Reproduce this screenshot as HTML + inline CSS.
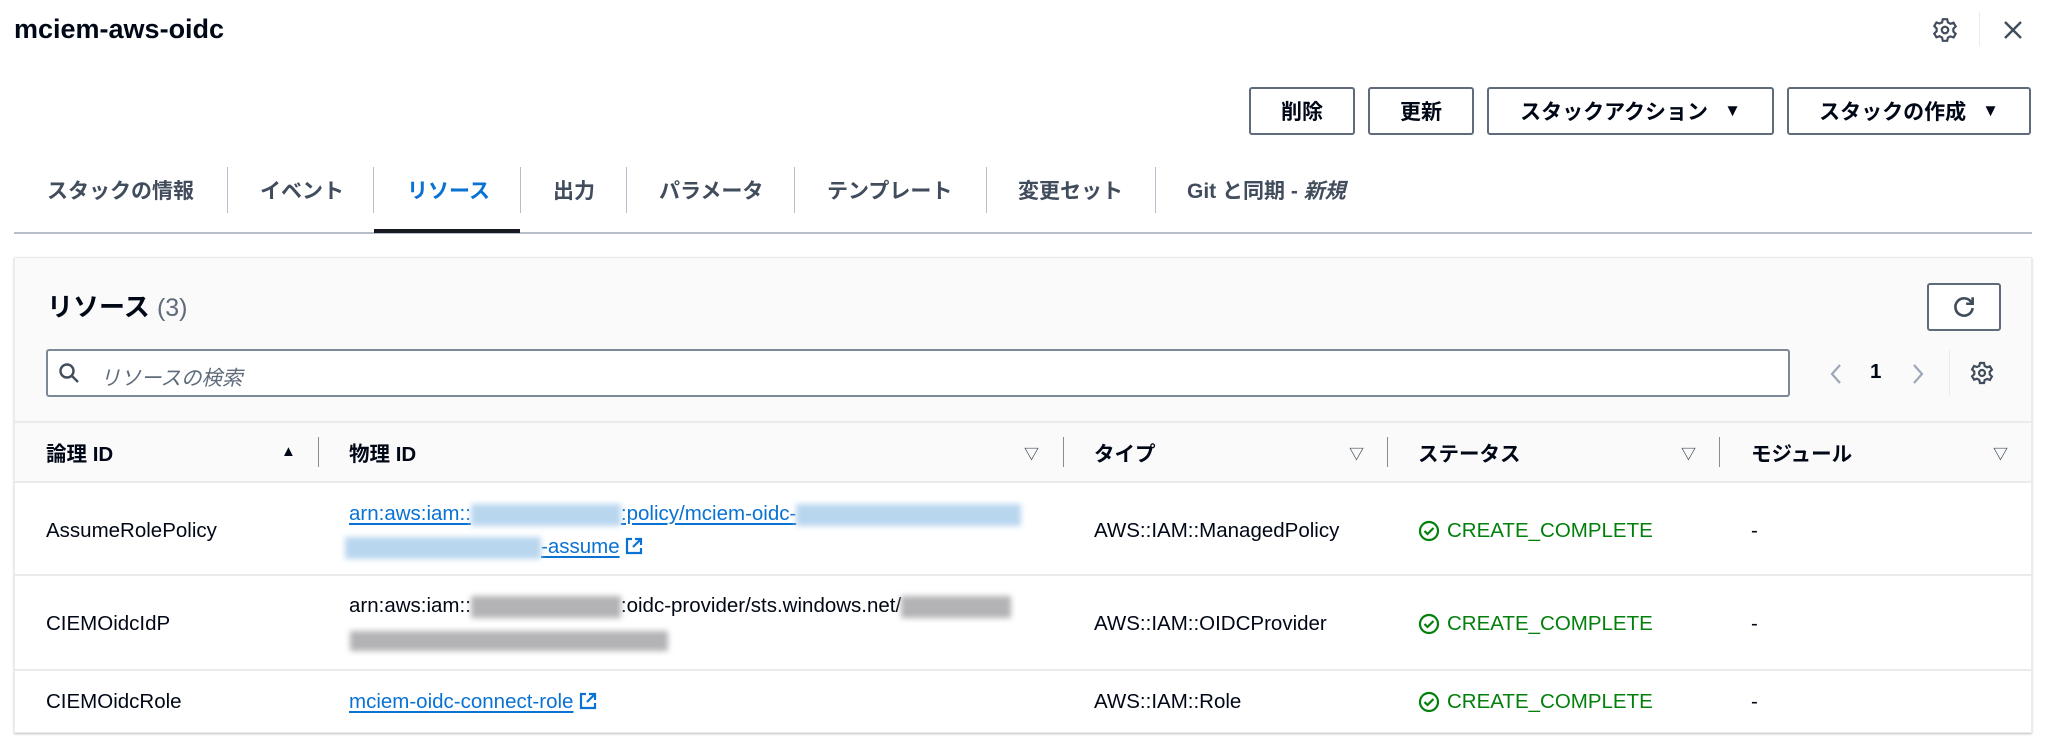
<!DOCTYPE html>
<html><head><meta charset="utf-8"><style>
*{margin:0;padding:0;box-sizing:border-box}
body{width:2048px;height:744px;background:#fff;position:relative;overflow:hidden;font-family:"Liberation Sans","Noto Sans CJK JP",sans-serif;color:#000716}
.a{position:absolute;white-space:nowrap}
.btn{position:absolute;top:87px;height:48px;border:2px solid #5f6b7a;border-radius:3px;background:#fff;font-weight:bold;font-size:21px;color:#000716;display:flex;align-items:center;justify-content:center;gap:16px}
.tab{position:absolute;top:190px;transform:translateY(-50%);font-size:21px;font-weight:bold;color:#414d5c}
.tsep{position:absolute;top:167px;width:1px;height:46px;background:#b6bec9}
.th{position:absolute;top:452px;transform:translateY(-50%);font-size:20.5px;font-weight:bold;color:#000716}
.hsep{position:absolute;top:437px;width:1px;height:30px;background:#8c8c94}
.tri{position:absolute;top:443px;font-size:15px;font-weight:bold;color:#414d5c}
.td{position:absolute;font-size:20.5px;transform:translateY(-50%)}
.rl{position:absolute;left:14px;width:2018px;height:2px;background:#e9ebed}
.lnk{color:#0972d3;text-decoration:underline;text-underline-offset:3px}
.bl{display:inline-block;vertical-align:middle;height:22px;filter:blur(3px)}
.ok{position:absolute;left:1418px;font-size:20.5px;color:#037f0c;transform:translateY(-50%);display:flex;align-items:center;gap:7px}
</style></head><body>
<div class="a" style="left:14px;top:14px;font-size:27px;font-weight:bold">mciem-aws-oidc</div>
<svg class="a" style="left:1932px;top:17px" width="26" height="26" viewBox="0 0 24 24" fill="none" stroke="#414d5c" stroke-width="2"><path d="M10 2h4l.7 3 2.3 1.3 2.9-1 2 3.4-2.2 2.1v2.6l2.2 2.1-2 3.4-2.9-1L14.7 19l-.7 3h-4l-.7-3L7 17.7l-2.9 1-2-3.4 2.2-2.1v-2.6L2.1 8.4l2-3.4 2.9 1L9.3 5z"/><circle cx="12" cy="12" r="3"/></svg>
<div class="a" style="left:1979px;top:12px;width:1px;height:34px;background:#e9ebed"></div>
<svg class="a" style="left:2002px;top:19px" width="22" height="22" viewBox="0 0 22 22" stroke="#414d5c" stroke-width="2.4"><path d="M3 3l16 16M19 3L3 19"/></svg>

<div class="btn" style="left:1249px;width:106px">削除</div>
<div class="btn" style="left:1368px;width:106px">更新</div>
<div class="btn" style="left:1487px;width:287px">スタックアクション <span style="font-size:17px">▼</span></div>
<div class="btn" style="left:1787px;width:244px">スタックの作成 <span style="font-size:17px">▼</span></div>

<div class="tab" style="left:47px">スタックの情報</div>
<div class="tsep" style="left:227px"></div>
<div class="tab" style="left:260px">イベント</div>
<div class="tsep" style="left:373px"></div>
<div class="tab" style="left:407px;color:#0972d3">リソース</div>
<div class="tsep" style="left:520px"></div>
<div class="tab" style="left:553px">出力</div>
<div class="tsep" style="left:626px"></div>
<div class="tab" style="left:659px">パラメータ</div>
<div class="tsep" style="left:794px"></div>
<div class="tab" style="left:827px">テンプレート</div>
<div class="tsep" style="left:986px"></div>
<div class="tab" style="left:1018px">変更セット</div>
<div class="tsep" style="left:1155px"></div>
<div class="tab" style="left:1187px">Git と同期 - <i>新規</i></div>
<div class="a" style="left:14px;top:232px;width:2018px;height:2px;background:#b6bec9"></div>
<div class="a" style="left:374px;top:229px;width:146px;height:4px;background:#16191f"></div>

<div class="a" style="left:14px;top:257px;width:2018px;height:476px;background:#fafafa;border:1px solid #eaeded;box-shadow:0 1px 2px rgba(0,7,22,.25)"></div>
<div class="a" style="left:47px;top:287px;font-size:26px;font-weight:bold">リソース <span style="font-weight:normal;color:#5f6b7a;font-size:25px">(3)</span></div>
<div class="a" style="left:1927px;top:283px;width:74px;height:48px;border:2px solid #5f6b7a;border-radius:3px;background:#fff"></div>
<svg class="a" style="left:1951px;top:294px" width="26" height="26" viewBox="0 0 24 24" fill="none" stroke="#414d5c" stroke-width="2.4"><path d="M19 8A8 8 0 1 0 20 13"/><path d="M20 3v6h-6"/></svg>

<div class="a" style="left:46px;top:349px;width:1744px;height:48px;border:2px solid #7d8998;border-radius:3px;background:#fff"></div>
<svg class="a" style="left:58px;top:362px" width="22" height="22" viewBox="0 0 22 22" fill="none" stroke="#414d5c" stroke-width="2.4"><circle cx="9" cy="9" r="6.5"/><path d="M14 14l6 6"/></svg>
<div class="a" style="left:100px;top:361px;font-size:20.5px;font-style:italic;color:#5f6b7a">リソースの検索</div>
<svg class="a" style="left:1828px;top:362px" width="16" height="24" viewBox="0 0 16 24" fill="none" stroke="#9ba7b6" stroke-width="2.2"><path d="M12 3L4 12l8 9"/></svg>
<div class="a" style="left:1870px;top:360px;font-size:20.5px;font-weight:bold">1</div>
<svg class="a" style="left:1910px;top:362px" width="16" height="24" viewBox="0 0 16 24" fill="none" stroke="#9ba7b6" stroke-width="2.2"><path d="M4 3l8 9-8 9"/></svg>
<div class="a" style="left:1949px;top:350px;width:1px;height:46px;background:#e9ebed"></div>
<svg class="a" style="left:1970px;top:361px" width="24" height="24" viewBox="0 0 24 24" fill="none" stroke="#414d5c" stroke-width="2.2"><path d="M10 2h4l.7 3 2.3 1.3 2.9-1 2 3.4-2.2 2.1v2.6l2.2 2.1-2 3.4-2.9-1L14.7 19l-.7 3h-4l-.7-3L7 17.7l-2.9 1-2-3.4 2.2-2.1v-2.6L2.1 8.4l2-3.4 2.9 1L9.3 5z"/><circle cx="12" cy="12" r="3"/></svg>

<div class="rl" style="top:421px"></div>
<div class="a" style="left:15px;top:482px;width:2016px;height:250px;background:#fff"></div>
<div class="rl" style="top:481px"></div>
<div class="th" style="left:46px">論理 ID</div>
<div class="tri" style="left:281px;color:#000716">▲</div>
<div class="hsep" style="left:318px"></div>
<div class="th" style="left:349px">物理 ID</div>
<div class="tri" style="left:1024px">▽</div>
<div class="hsep" style="left:1063px"></div>
<div class="th" style="left:1094px">タイプ</div>
<div class="tri" style="left:1349px">▽</div>
<div class="hsep" style="left:1387px"></div>
<div class="th" style="left:1418px">ステータス</div>
<div class="tri" style="left:1681px">▽</div>
<div class="hsep" style="left:1719px"></div>
<div class="th" style="left:1751px">モジュール</div>
<div class="tri" style="left:1993px">▽</div>

<!-- row 1 -->
<div class="td" style="left:46px;top:531px">AssumeRolePolicy</div>
<div class="td" style="left:349px;top:514px"><span class="lnk">arn:aws:iam::</span><span class="bl" style="width:150px;background:#b9d6ef"></span><span class="lnk">:policy/mciem-oidc-</span><span class="bl" style="width:225px;background:#b9d6ef"></span></div>
<div class="td" style="left:345px;top:547px"><span class="bl" style="width:196px;background:#b9d6ef"></span><span class="lnk">-assume</span> <svg width="18" height="18" viewBox="0 0 18 18" fill="none" stroke="#0972d3" stroke-width="2.2" style="vertical-align:-2px"><path d="M7 2H2v14h14v-5M10 2h6v6M16 2L8 10"/></svg></div>
<div class="td" style="left:1094px;top:531px">AWS::IAM::ManagedPolicy</div>
<div class="ok" style="top:531px"><svg width="22" height="22" viewBox="0 0 22 22" fill="none" stroke="#037f0c" stroke-width="2.2"><circle cx="11" cy="11" r="9"/><path d="M6.5 11l3 3 6-6"/></svg>CREATE_COMPLETE</div>
<div class="td" style="left:1751px;top:531px">-</div>
<div class="rl" style="top:574px"></div>
<!-- row 2 -->
<div class="td" style="left:46px;top:624px">CIEMOidcIdP</div>
<div class="td" style="left:349px;top:606px">arn:aws:iam::<span class="bl" style="width:150px;background:#b3b3b6"></span>:oidc-provider/sts.windows.net/<span class="bl" style="width:110px;background:#b3b3b6"></span></div>
<div class="td" style="left:350px;top:640px"><span class="bl" style="width:318px;height:20px;background:#b3b3b6"></span></div>
<div class="td" style="left:1094px;top:624px">AWS::IAM::OIDCProvider</div>
<div class="ok" style="top:624px"><svg width="22" height="22" viewBox="0 0 22 22" fill="none" stroke="#037f0c" stroke-width="2.2"><circle cx="11" cy="11" r="9"/><path d="M6.5 11l3 3 6-6"/></svg>CREATE_COMPLETE</div>
<div class="td" style="left:1751px;top:624px">-</div>
<div class="rl" style="top:669px"></div>
<!-- row 3 -->
<div class="td" style="left:46px;top:702px">CIEMOidcRole</div>
<div class="td" style="left:349px;top:702px"><span class="lnk">mciem-oidc-connect-role</span> <svg width="18" height="18" viewBox="0 0 18 18" fill="none" stroke="#0972d3" stroke-width="2.2" style="vertical-align:-2px"><path d="M7 2H2v14h14v-5M10 2h6v6M16 2L8 10"/></svg></div>
<div class="td" style="left:1094px;top:702px">AWS::IAM::Role</div>
<div class="ok" style="top:702px"><svg width="22" height="22" viewBox="0 0 22 22" fill="none" stroke="#037f0c" stroke-width="2.2"><circle cx="11" cy="11" r="9"/><path d="M6.5 11l3 3 6-6"/></svg>CREATE_COMPLETE</div>
<div class="td" style="left:1751px;top:702px">-</div>
</body></html>
